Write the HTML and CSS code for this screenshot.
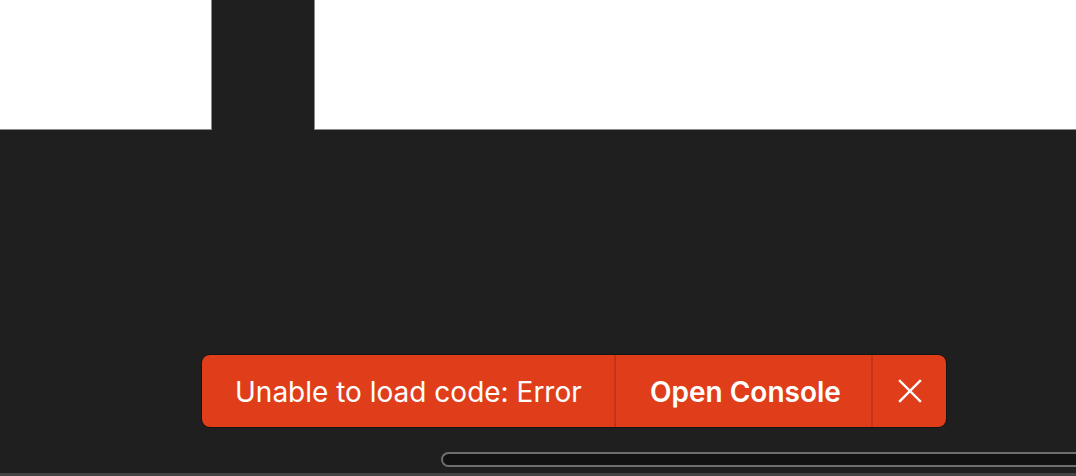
FILE: index.html
```html
<!DOCTYPE html>
<html>
<head>
<meta charset="utf-8">
<link rel="stylesheet" href="styles.css">
</head>
<body>
<div class="page">
  <div class="top">
    <div class="pane pane-left"></div>
    <div class="gap-col"></div>
    <div class="pane pane-right"></div>
  </div>
  <div class="middle">
    <div class="toast">
      <div class="seg msg">Unable to load code: Error</div>
      <div class="seg action">Open Console</div>
      <div class="seg close">
        <svg width="24" height="24" viewBox="0 0 24 24" fill="none" stroke="#fff" stroke-width="2.4" stroke-linecap="square"><path d="M2 2 L22 22 M22 2 L2 22"/></svg>
      </div>
    </div>
  </div>
  <div class="bottom">
    <div class="pill"></div>
  </div>
</div>
</body>
</html>
```
FILE: styles.css
```css
html, body { margin: 0; padding: 0; }
body { background: #1f1f1f; font-family: Inter, "Noto Sans", sans-serif; overflow: hidden; }
.page { width: 1076px; height: 476px; display: flex; flex-direction: column; }
.top { height: 130px; display: flex; }
.pane { background: #fff; height: 129px; border-bottom: 1px solid #8a8a8a; }
.pane-left { width: 211px; border-right: 1px solid #8a8a8a; }
.gap-col { width: 102px; }
.pane-right { flex: 1; border-left: 1px solid #8a8a8a; }
.middle { flex: 1; display: flex; align-items: flex-start; padding: 225px 0 0 202px; }
.toast { display: flex; height: 72px; background: #e03e1a; border-radius: 8px; box-shadow: 0 0 0 1px rgba(0,0,0,0.35); color: #fff; }
.seg { display: flex; align-items: center; font-size: 28px; padding-top: 2px; box-sizing: border-box; }
.msg { width: 414px; padding-left: 33px; font-weight: 400; border-right: 2px solid #c43416; }
.action { width: 257px; padding-left: 34px; font-weight: 600; border-right: 2px solid #c43416; }
.close { width: 73px; justify-content: center; padding-top: 0; }
.bottom { height: 36px; border-bottom: 3px solid #444; box-sizing: border-box; padding: 12px 0 0 441px; }
.pill { height: 15px; border: 2px solid #6e6e6e; border-right: none; border-radius: 9px 0 0 9px; background: #121212; box-sizing: border-box; }
```
